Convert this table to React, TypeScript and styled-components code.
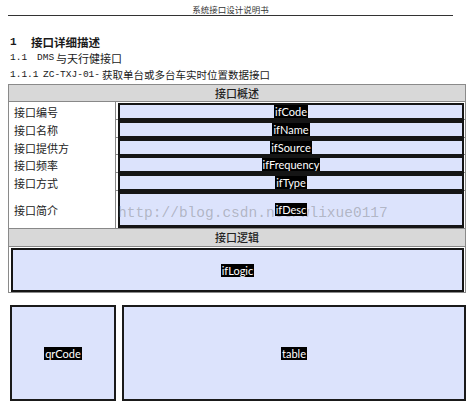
import React from "react";
import styled, { createGlobalStyle } from "styled-components";

const Global = createGlobalStyle`
  html, body { margin: 0; padding: 0; background: #fff; }
  body { font-family: "Noto Sans CJK SC", sans-serif; color: #222; }
`;

const Page = styled.div`
  width: 474px;
  height: 412px;
  padding: 0 8px;
  box-sizing: border-box;
  overflow: hidden;
  display: flex;
  flex-direction: column;
`;

const RunningHeader = styled.div`
  margin-right: 13px;
  padding-top: 3px;
  height: 12px;
  border-bottom: 1px solid #333;
  font-size: 8.5px;
  line-height: 12px;
  text-align: center;
  color: #333;
`;

const Heading = styled.div<{ $top: number; $size: number; $bold?: boolean }>`
  margin-top: ${(p) => p.$top}px;
  height: 16px;
  line-height: 16px;
  padding-left: 2px;
  display: flex;
  align-items: center;
  font-size: ${(p) => p.$size}px;
  font-weight: ${(p) => (p.$bold ? 700 : 400)};
  color: #1a1a1a;
  white-space: nowrap;
`;

const Num = styled.span<{ $w: number; $size?: number }>`
  display: inline-block;
  width: ${(p) => p.$w}px;
  font-family: "Liberation Mono", monospace;
  font-size: ${(p) => p.$size ?? 9.5}px;
`;

const Latin = styled.span`
  font-family: "Liberation Mono", monospace;
  font-size: 9.5px;
  margin-right: 2px;
`;

const Table = styled.div`
  margin-top: 1px;
  width: 458px;
  border: 1px solid #8a8a8a;
  box-sizing: border-box;
  display: flex;
  flex-direction: column;
`;

const SectionHeader = styled.div<{ $h: number }>`
  height: ${(p) => p.$h}px;
  line-height: ${(p) => p.$h}px;
  background: #d8d8d8;
  text-align: center;
  font-size: 11px;
  font-weight: 500;
  border-bottom: 1px solid #888;
  color: #222;
`;

const Row = styled.div<{ $h: number }>`
  display: grid;
  grid-template-columns: 107px 1fr;
  height: ${(p) => p.$h}px;
  border-bottom: 1px solid #888;
  box-sizing: border-box;
`;

const LabelCell = styled.div`
  border-right: 1px solid #888;
  padding-left: 5px;
  display: flex;
  align-items: center;
  font-size: 11px;
  background: #fff;
  color: #222;
`;

const ValueCell = styled.div`
  padding: 1px 1px 0 2px;
  display: flex;
  position: relative;
`;

const FieldBox = styled.div`
  flex: 1;
  background: #dce3fc;
  border: 2px solid #151515;
  border-bottom-width: 3px;
  display: flex;
  align-items: center;
  justify-content: center;
`;

const Tag = styled.span`
  position: relative;
  z-index: 1;
  background: #000;
  color: #fff;
  font-family: Lato, "Open Sans", sans-serif;
  font-size: 11px;
  line-height: 13px;
  padding: 0 1px;
`;

const Watermark = styled.span`
  position: absolute;
  left: 2px;
  top: 13px;
  font-family: "Liberation Mono", monospace;
  font-size: 14.5px;
  line-height: 18px;
  color: rgba(110, 110, 110, 0.4);
  pointer-events: none;
  white-space: nowrap;
`;

const LogicCell = styled.div`
  height: 44px;
  padding: 1px 1px 0 2px;
  display: flex;
`;

const LogicBox = styled(FieldBox)`
  border-bottom-width: 2px;
`;

const Bottom = styled.div`
  margin-top: 12px;
  padding-left: 2px;
  display: flex;
  gap: 6px;
  height: 96px;
`;

const Panel = styled.div<{ $w?: number }>`
  ${(p) => (p.$w ? `width: ${p.$w}px;` : "flex: 1;")}
  box-sizing: border-box;
  background: #dce3fc;
  border: 2px solid #1a1a1a;
  display: flex;
  align-items: center;
  justify-content: center;
`;

const fields: { label: string; tag: string; h: number }[] = [
  { label: "接口编号", tag: "ifCode", h: 18 },
  { label: "接口名称", tag: "ifName", h: 18 },
  { label: "接口提供方", tag: "ifSource", h: 17 },
  { label: "接口频率", tag: "ifFrequency", h: 18 },
  { label: "接口方式", tag: "ifType", h: 18 },
];

export default function App() {
  return (
    <>
      <Global />
      <Page>
        <RunningHeader>系统接口设计说明书</RunningHeader>
        <Heading $top={18} $size={11.5} $bold>
          <Num $w={21} $size={11}>1</Num>接口详细描述
        </Heading>
        <Heading $top={0} $size={11}>
          <Num $w={27}>1.1</Num>
          <Latin>DMS</Latin>与天行健接口
        </Heading>
        <Heading $top={1} $size={10.5}>
          <Num $w={33}>1.1.1</Num>
          <Latin>ZC-TXJ-01-</Latin>获取单台或多台车实时位置数据接口
        </Heading>
        <Table>
          <SectionHeader $h={16}>接口概述</SectionHeader>
          {fields.map((f) => (
            <Row key={f.tag} $h={f.h}>
              <LabelCell>{f.label}</LabelCell>
              <ValueCell>
                <FieldBox>
                  <Tag>{f.tag}</Tag>
                </FieldBox>
              </ValueCell>
            </Row>
          ))}
          <Row $h={38}>
            <LabelCell>接口简介</LabelCell>
            <ValueCell>
              <FieldBox>
                <Tag>ifDesc</Tag>
              </FieldBox>
              <Watermark>http://blog.csdn.net/wlixue0117</Watermark>
            </ValueCell>
          </Row>
          <SectionHeader $h={17}>接口逻辑</SectionHeader>
          <LogicCell>
            <LogicBox>
              <Tag>ifLogic</Tag>
            </LogicBox>
          </LogicCell>
        </Table>
        <Bottom>
          <Panel $w={106}>
            <Tag>qrCode</Tag>
          </Panel>
          <Panel>
            <Tag>table</Tag>
          </Panel>
        </Bottom>
      </Page>
    </>
  );
}
